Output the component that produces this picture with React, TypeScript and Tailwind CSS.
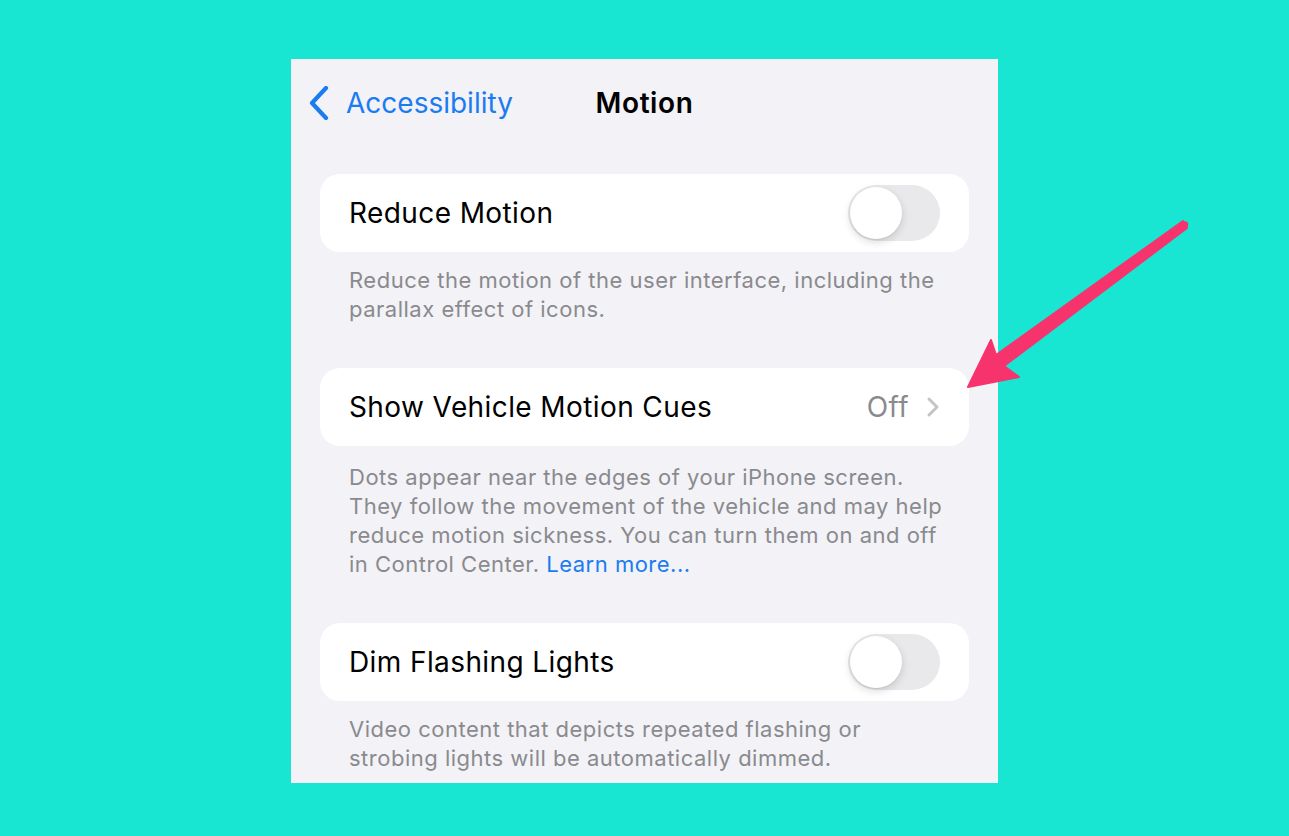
import React from 'react'

function Toggle() {
  return (
    <div className="relative h-[56px] w-[92px] shrink-0 rounded-full bg-[#e9e9eb]">
      <div className="absolute top-[2px] left-[2px] h-[52px] w-[52px] rounded-full bg-white shadow-[0_3px_8px_rgba(0,0,0,0.15),0_1px_1px_rgba(0,0,0,0.06)]" />
    </div>
  )
}

function Footer({ children, pt = 'pt-[14px]' }: { children: React.ReactNode; pt?: string }) {
  return (
    <p className={`${pt} px-[58px] text-[22px] leading-[28.7px] tracking-[0.5px] whitespace-nowrap text-[#8a8a8e]`}>
      {children}
    </p>
  )
}

export default function App() {
  return (
    <div
      className="relative flex h-[836px] w-full justify-center overflow-hidden bg-[#18e6d2] pt-[59px]"
      style={{ fontFamily: 'Inter, "Liberation Sans", sans-serif' }}
    >
      <div className="h-[724px] w-[707px] bg-[#f2f2f7]">
        <header className="grid h-[88px] grid-cols-[1fr_auto_1fr] items-center">
          <a
            href="#"
            className="flex items-center gap-[16px] pl-[17px] text-[#1a7cf0]"
            onClick={(e) => e.preventDefault()}
          >
            <svg width="22" height="34" viewBox="0 0 22 34" fill="none">
              <path d="M18 2 L4 17 L18 32" stroke="currentColor" strokeWidth="4.2" strokeLinecap="round" strokeLinejoin="round" />
            </svg>
            <span className="text-[28px] leading-none">Accessibility</span>
          </a>
          <h1 className="text-[28px] leading-none font-semibold tracking-[0.6px] text-black">Motion</h1>
          <div />
        </header>

        <div className="pt-[27px]">
          <div className="mx-[29px] flex h-[78px] items-center justify-between rounded-[20px] bg-white px-[29px]">
            <span className="text-[28px] tracking-[0.4px] text-black">Reduce Motion</span>
            <Toggle />
          </div>
          <Footer>
            Reduce the motion of the user interface, including the
            <br />
            parallax effect of icons.
          </Footer>

          <div className="mx-[29px] mt-[45px] flex h-[78px] items-center justify-between rounded-[20px] bg-white px-[29px]">
            <span className="text-[28px] tracking-[0.4px] text-black">Show Vehicle Motion Cues</span>
            <div className="flex items-center gap-[17px]">
              <span className="text-[28px] tracking-[0.4px] text-[#8a8a8e]">Off</span>
              <svg width="14" height="22" viewBox="0 0 14 22" fill="none">
                <path d="M3 3 L11 11 L3 19" stroke="#c4c4c7" strokeWidth="3" strokeLinecap="round" strokeLinejoin="round" />
              </svg>
            </div>
          </div>
          <Footer pt="pt-[17px]">
            Dots appear near the edges of your iPhone screen.
            <br />
            They follow the movement of the vehicle and may help
            <br />
            reduce motion sickness. You can turn them on and off
            <br />
            in Control Center. <span className="text-[#1a7cf0]">Learn more...</span>
          </Footer>

          <div className="mx-[29px] mt-[45px] flex h-[78px] items-center justify-between rounded-[20px] bg-white px-[29px]">
            <span className="text-[28px] tracking-[0.4px] text-black">Dim Flashing Lights</span>
            <Toggle />
          </div>
          <Footer>
            Video content that depicts repeated flashing or
            <br />
            strobing lights will be automatically dimmed.
          </Footer>
        </div>
      </div>

      <svg
        className="pointer-events-none absolute top-0 left-0"
        width="1289"
        height="836"
        viewBox="0 0 1289 836"
      >
        <path
          d="M1183 221 L996 355 L991 340 L968 387 L1019 377 L1004 366 L1187 228 Z"
          fill="#f7336e"
          stroke="#f7336e"
          strokeWidth="2"
          strokeLinejoin="round"
        />
        <circle cx="1185" cy="224.5" r="3.2" fill="#f7336e" />
      </svg>
    </div>
  )
}
